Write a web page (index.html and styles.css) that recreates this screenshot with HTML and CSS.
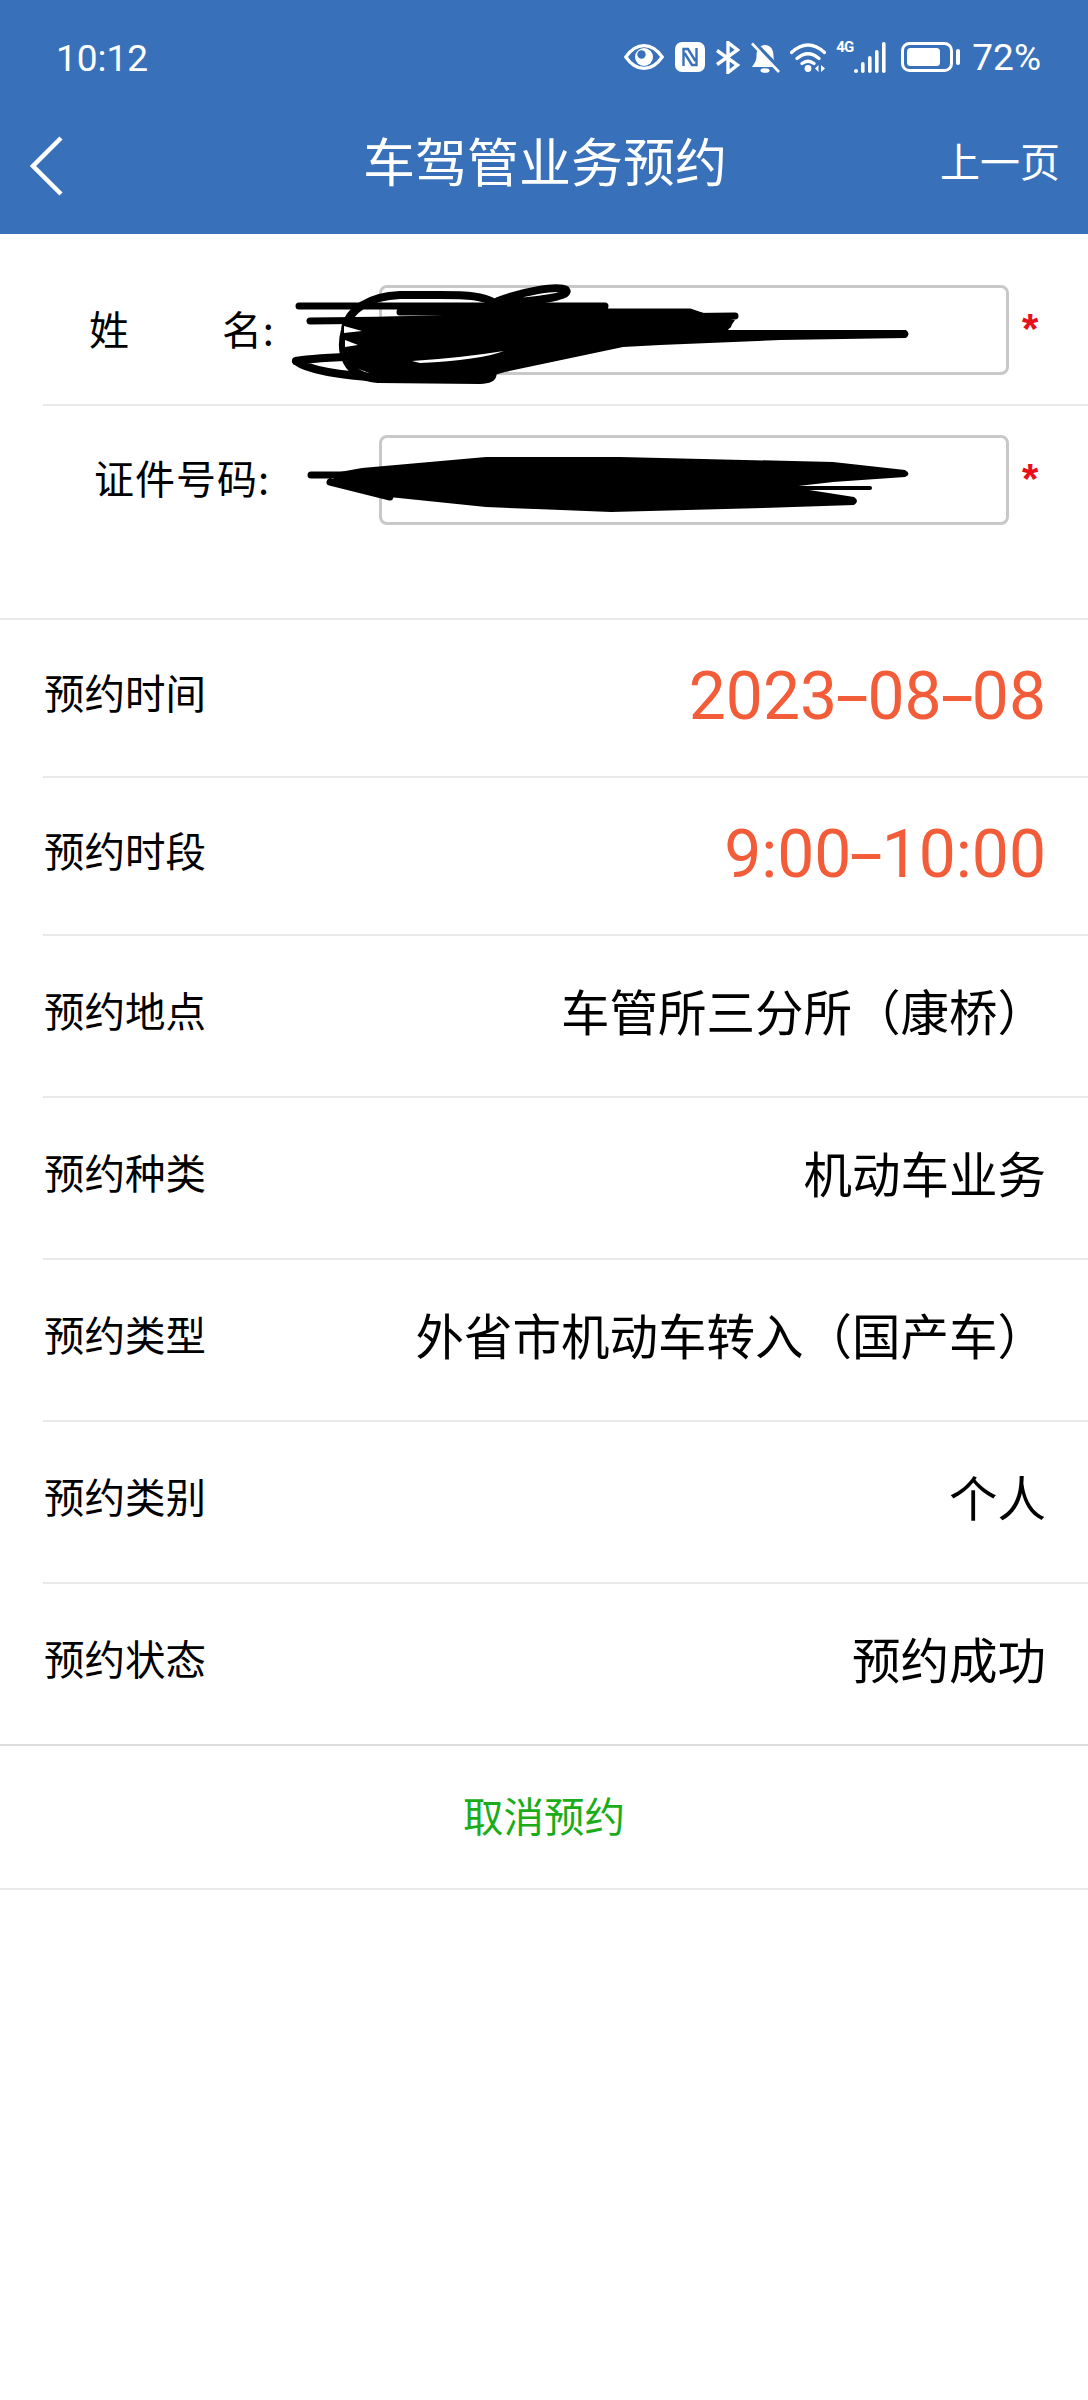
FILE: index.html
```html
<!DOCTYPE html>
<html lang="zh-CN">
<head>
    <meta charset="UTF-8">
    <meta name="viewport" content="width=device-width, initial-scale=1.0">
    <title>车驾管业务预约</title>
    <link rel="stylesheet" href="styles.css">
</head>
<body>
    <header class="header">
        <div class="status-bar">
            <span class="clock">10:12</span>
            <div class="status-icons">
                <svg class="ic-eye" viewBox="0 0 40 26"><path d="M1.8 13C8 4 14 1.6 20 1.6S32 4 38.2 13C32 22 26 24.4 20 24.4S8 22 1.8 13Z" fill="none" stroke="#fff" stroke-width="3.2"/><circle cx="20" cy="13" r="9" fill="#fff"/><circle cx="17.5" cy="10.5" r="4.2" fill="#3871ba"/></svg>
                <svg class="ic-nfc" viewBox="0 0 30 30"><rect width="30" height="30" rx="7" fill="#fff"/><path d="M8.5 24V7H13L20.5 19M21.5 6V23H17L9.5 11" fill="none" stroke="#3871ba" stroke-width="2.4"/></svg>
                <svg class="ic-bt" viewBox="0 0 24 33"><path d="M1 9.500L21.500 24L12 31.500V1.500L21.500 9L1 23.500" fill="none" stroke="#fff" stroke-width="3.400"/></svg>
                <svg class="ic-bell" viewBox="0 0 30 31"><path d="M15 3C9 3 6.500 8 6.500 14C6.500 19 4 22 2 25H28C26 22 23.500 19 23.500 14C23.500 8 21 3 15 3Z" fill="#fff"/><ellipse cx="15" cy="28.500" rx="4.500" ry="2.300" fill="#fff"/><path d="M3 0L31 29" stroke="#3871ba" stroke-width="5"/><path d="M2 1.500L29 30" stroke="#fff" stroke-width="2.600"/></svg>
                <svg class="ic-wifi" viewBox="0 0 36 30"><path d="M1.500 10.500Q18 -4.500 34.500 10.500M7 16.500Q18 7 29 16.500M12 21.500Q18 17 24 21.500" fill="none" stroke="#fff" stroke-width="3.200" stroke-linecap="round"/><circle cx="18" cy="26.500" r="3.400" fill="#fff"/><path d="M28.500 23L25 26.500L28.500 30ZM31 23L35 26.500L31 30Z" fill="#fff"/></svg>
                <span class="net-type">4G</span>
                <svg class="ic-signal" viewBox="0 0 32 31"><rect x="0" y="27" width="4" height="4" rx="2" fill="#fff"/><rect x="7" y="20" width="3.600" height="11" rx="1.800" fill="#fff"/><rect x="14" y="14" width="3.600" height="17" rx="1.800" fill="#fff"/><rect x="21" y="8" width="3.600" height="23" rx="1.800" fill="#fff"/><rect x="28" y="0" width="3.600" height="31" rx="1.800" fill="#fff"/></svg>
                <svg class="ic-battery" viewBox="0 0 59 30"><rect x="1.500" y="1.500" width="49" height="27" rx="7" fill="none" stroke="#fff" stroke-width="3"/><rect x="6" y="6" width="33" height="18" rx="3.500" fill="#fff"/><rect x="55" y="7" width="4" height="16" rx="2" fill="#fff"/></svg>
                <span class="battery-text">72%</span>
            </div>
        </div>
        <div class="nav">
            <svg class="nav-back" viewBox="0 0 34 60"><path d="M31 2L3 30L31 58" fill="none" stroke="#fff" stroke-width="4.500"/></svg>
            <div class="nav-title">车驾管业务预约</div>
            <div class="nav-prev">上一页</div>
        </div>
    </header>

    <div class="form">
        <div class="field field-line">
            <div class="field-label field-label-split"><span>姓</span><span>名:</span></div>
            <div class="field-input"></div>
            <span class="field-star">*</span>
        </div>
        <div class="field">
            <div class="field-label field-label-long">证件号码:</div>
            <div class="field-input"></div>
            <span class="field-star">*</span>
        </div>
        <!-- 涂抹遮挡 -->
        <svg class="scribble" viewBox="0 234 1088 386">
            <g fill="none" stroke="#000" stroke-linecap="round" stroke-linejoin="round">
                <path d="M299 306H605M310 321L735 316M400 312H690L728 325" stroke-width="7"/>
                <path d="M498 301C525 291 558 285 566 290C572 297 530 302 495 303C482 296 470 295 440 295L400 295C370 296 347 310 345 330C339 352 345 376 378 379L480 380C496 380 496 371 484 368" stroke-width="8"/>
                <path d="M296 361C330 355 380 358 470 350C490 348 505 346 510 342M296 361C310 372 350 376 385 378" stroke-width="8"/>
                <path d="M311 475H362M330 482L390 497" stroke-width="7"/>
                <path d="M780 488H870" stroke-width="4"/>
            </g>
            <path d="M345 318L610 310L692 311L735 320L728 330L906 330Q911 334 906 338L780 340L660 345L623 347L505 372L480 379L385 379L348 365Z" fill="#000"/>
            <path d="M344 326L362 331L344 333ZM345 340L358 345L345 347ZM412 361Q460 358 504 351Q480 360 420 363Z" fill="#fff"/>
            <path d="M362 468L486 457H620L833 462L905 470Q912 474 905 477L833 482L790 487L854 497Q860 501 854 505L763 508L611 512L486 507L389 497L330 482L340 472Z" fill="#000"/>
        </svg>
    </div>

    <div class="rows">
        <div class="row row-short"><span class="row-label">预约时间</span><span class="row-num">2023<span class="dash">-</span>08<span class="dash">-</span>08</span></div>
        <div class="row row-short"><span class="row-label">预约时段</span><span class="row-num">9:00<span class="dash">-</span>10:00</span></div>
        <div class="row"><span class="row-label">预约地点</span><span class="row-value">车管所三分所（康桥）</span></div>
        <div class="row"><span class="row-label">预约种类</span><span class="row-value">机动车业务</span></div>
        <div class="row"><span class="row-label">预约类型</span><span class="row-value">外省市机动车转入（国产车）</span></div>
        <div class="row"><span class="row-label">预约类别</span><span class="row-value">个人</span></div>
        <div class="row"><span class="row-label">预约状态</span><span class="row-value">预约成功</span></div>
    </div>

    <div class="cancel">取消预约</div>
</body>
</html>
```

FILE: styles.css
```css
body { font-family: "Noto Sans CJK SC", Roboto, sans-serif; margin: 0; padding: 0; background: #fff; color: #000; }

.header { background-color: #3871ba; color: #fff; height: 234px; }
.status-bar { display: flex; justify-content: space-between; align-items: center; height: 114px; padding: 0 47px 0 56px; }
.clock { font-family: Roboto, sans-serif; font-size: 37px; line-height: 1; margin-top: 2px; }
.status-icons { display: flex; align-items: center; gap: 10px; }
.status-icons svg { display: block; }
.ic-eye { width: 40px; height: 26px; margin-right: 1px; }
.ic-nfc { width: 30px; height: 30px; margin-right: 1px; }
.ic-bt { width: 24px; height: 33px; }
.ic-bell { width: 30px; height: 31px; }
.ic-wifi { width: 36px; height: 30px; }
.net-type { font-family: Roboto, sans-serif; font-size: 15px; font-weight: 700; line-height: 1; letter-spacing: -1px; align-self: flex-start; width: 18px; margin-right: -10px; margin-top: 1px; }
.ic-signal { width: 32px; height: 31px; margin-right: 5px; }
.ic-battery { width: 59px; height: 30px; margin-right: 2px; }
.battery-text { font-family: Roboto, sans-serif; font-size: 37px; line-height: 1; }

.nav { display: grid; grid-template-columns: 1fr auto 1fr; align-items: center; height: 104px; padding: 0 28px 0 30px; }
.nav-back { display: block; width: 34px; height: 60px; }
.nav-title { font-size: 52px; line-height: 1; margin-bottom: 12px; }
.nav-prev { font-size: 40px; line-height: 1; text-align: right; margin-bottom: 12px; }

.form { position: relative; height: 386px; border-bottom: 2px solid #e9e9e9; box-sizing: border-box; }
.field { display: flex; align-items: center; height: 148px; margin-left: 43px; }
.field-line { height: 172px; padding-top: 22px; box-sizing: border-box; border-bottom: 2px solid #e9e9e9; }
.field-label { box-sizing: border-box; width: 232px; font-size: 40px; line-height: 1; letter-spacing: 1px; padding-left: 46px; margin-top: -7px; }
.field-label-split { display: flex; justify-content: space-between; margin-top: -5px; }
.field-label-long { padding-left: 51px; white-space: nowrap; }
.field-input { box-sizing: border-box; width: 630px; height: 90px; margin-left: 104px; border: 3px solid #c8c8c8; border-radius: 8px; background: #fff; }
.field-star { color: #e8101a; font-family: "Liberation Sans", sans-serif; font-size: 42px; font-weight: 700; line-height: 1; margin-left: 13px; margin-top: -2px; }
.scribble { position: absolute; left: 0; top: 0; width: 1088px; height: 386px; }

.row { display: flex; justify-content: space-between; align-items: center; box-sizing: border-box; height: 162px; margin-left: 43px; padding: 0 42px 11px 1px; border-bottom: 2px solid #e9e9e9; }
.row-short { height: 158px; }
.row-label { font-size: 40.5px; line-height: 1; }
.row-value { font-size: 48.5px; line-height: 1; }
.row-num { font-family: Roboto, sans-serif; font-size: 66px; line-height: 1; color: #f25c38; margin-top: 9px; }
.dash { display: inline-block; margin: 0 6px; transform: scaleX(1.8); }
.rows .row:last-child { margin-left: 0; padding-left: 44px; border-bottom-color: #dcdcdc; }

.cancel { display: flex; justify-content: center; align-items: center; height: 144px; box-sizing: border-box; font-size: 40.5px; color: #1aad19; border-bottom: 2px solid #e9e9e9; padding-bottom: 6px; }
```
